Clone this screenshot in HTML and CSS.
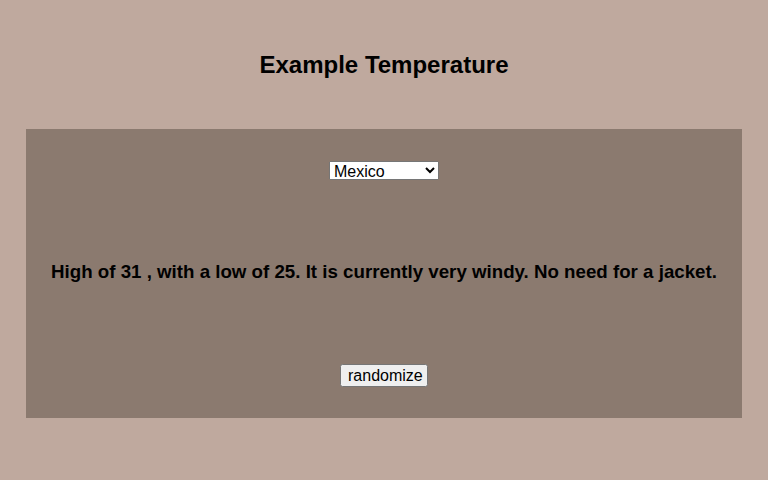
FILE: index.html
```html
<!DOCTYPE html>
<html>
<head>
<meta charset="utf-8">
<link rel="stylesheet" href="styles.css">
</head>
<body>
<h2 class="title">Example Temperature</h2>
<div class="panel">
  <select class="country">
    <option>Mexico</option>
    <option>Canada</option>
    <option>USA</option>
  </select>
  <p class="summary">High of 31 , with a low of 25. It is currently very windy. No need for a jacket.</p>
  <button class="rand">randomize</button>
</div>
</body>
</html>
```
FILE: styles.css
```css
html, body {
  margin: 0;
  padding: 0;
  background: #bfa99e;
  font-family: "Liberation Sans", Arial, sans-serif;
  color: #000;
}
.title {
  margin: 51px 0 50px;
  font-size: 24px;
  line-height: 28px;
  font-weight: bold;
  text-align: center;
}
.panel {
  margin: 0 26px;
  background: #8b7a6f;
  padding: 32px 0 31px;
  display: flex;
  flex-direction: column;
  align-items: center;
}
.country {
  width: 110px;
  height: 19px;
  font-family: "Liberation Sans", Arial, sans-serif;
  font-size: 16px;
  padding: 0;
}
.summary {
  margin: 81px 0 0;
  font-size: 18.72px;
  line-height: 22px;
  font-weight: bold;
  text-align: center;
}
.rand {
  margin-top: 81px;
  width: 88px;
  height: 23px;
  font-family: "Liberation Sans", Arial, sans-serif;
  font-size: 16px;
  padding: 0 6px;
}
```
